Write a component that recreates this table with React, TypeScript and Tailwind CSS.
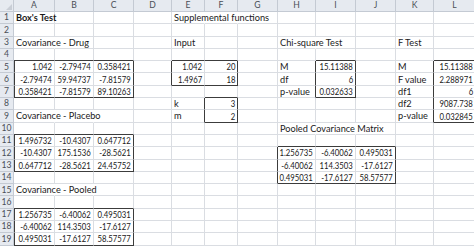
import React from "react";

type Cell = { v: string; b?: boolean; n?: boolean };

const COLS = ["A", "B", "C", "D", "E", "F", "G", "H", "I", "J", "K", "L"];
const W = [
  "w-[41px]",
  "w-[39px]",
  "w-[40px]",
  "w-[38px]",
  "w-[33px]",
  "w-[33px]",
  "w-[40px]",
  "w-[38px]",
  "w-[40px]",
  "w-[40px]",
  "w-[38px]",
  "w-[42px]",
];

const data: Record<string, Cell> = {};
const t = (k: string, v: string, b = false) => (data[k] = { v, b });
const n = (k: string, v: string) => (data[k] = { v, n: true });

t("A1", "Box's Test", true);
t("E1", "Supplemental functions");
t("A3", "Covariance - Drug");
t("E3", "Input");
t("H3", "Chi-square Test");
t("K3", "F Test");
t("A9", "Covariance - Placebo");
t("A15", "Covariance - Pooled");
t("H10", "Pooled Covariance Matrix");
t("E8", "k");
t("E9", "m");
n("F8", "3");
n("F9", "2");
t("H5", "M");
t("H6", "df");
t("H7", "p-value");
n("I5", "15.11388");
n("I6", "6");
n("I7", "0.032633");
t("K5", "M");
t("K6", "F value");
t("K7", "df1");
t("K8", "df2");
t("K9", "p-value");
n("L5", "15.11388");
n("L6", "2.288971");
n("L7", "6");
n("L8", "9087.738");
n("L9", "0.032845");
n("E5", "1.042");
n("F5", "20");
n("E6", "1.4967");
n("F6", "18");

const fill = (row: number, col: number, m: string[][]) => {
  m.forEach((r, i) =>
    r.forEach((v, j) => n(`${COLS[col + j]}${row + i}`, v))
  );
};
fill(5, 0, [
  ["1.042", "-2.79474", "0.358421"],
  ["-2.79474", "59.94737", "-7.81579"],
  ["0.358421", "-7.81579", "89.10263"],
]);
fill(11, 0, [
  ["1.496732", "-10.4307", "0.647712"],
  ["-10.4307", "175.1536", "-28.5621"],
  ["0.647712", "-28.5621", "24.45752"],
]);
const pooled = [
  ["1.256735", "-6.40062", "0.495031"],
  ["-6.40062", "114.3503", "-17.6127"],
  ["0.495031", "-17.6127", "58.57577"],
];
fill(17, 0, pooled);
fill(12, 7, pooled);

// boxes: [r1, c1, r2, c2]
const BOXES: number[][] = [
  [5, 0, 7, 2],
  [5, 4, 6, 5],
  [8, 5, 9, 5],
  [5, 8, 7, 8],
  [5, 11, 9, 11],
  [11, 0, 13, 2],
  [17, 0, 19, 2],
  [12, 7, 14, 9],
];

const boxOf = (r: number, c: number) =>
  BOXES.find((b) => r >= b[0] && r <= b[2] && c >= b[1] && c <= b[3]);

const darkRight = (r: number, c: number) => {
  const a = boxOf(r, c);
  if (a && a[3] === c) return true;
  const b = boxOf(r, c + 1);
  if (b && b[1] === c + 1) return true;
  return false;
};
const darkBottom = (r: number, c: number) => {
  const a = boxOf(r, c);
  if (a && a[2] === r) return true;
  const b = boxOf(r + 1, c);
  if (b && b[0] === r + 1) return true;
  return false;
};

const hideRight = new Set([
  "A3",
  "A9",
  "B9",
  "A15",
  "B15",
  "E1",
  "F1",
  "H3",
  "H10",
  "I10",
]);

const ROWS = Array.from({ length: 19 }, (_, i) => i + 1);

export default function App() {
  return (
    <div className="w-[474px] h-[246px] overflow-hidden bg-white font-['Lato','Noto_Sans',sans-serif] text-[9.2px] text-[#1a1a1a]">
      {/* column header */}
      <div className="flex h-[12px]">
        <div className="w-[14px] shrink-0 bg-[#e6eaf0] border-r border-b border-[#c4cad3] relative">
          <div className="absolute right-[1px] bottom-[1px] w-0 h-0 border-l-[6px] border-l-transparent border-b-[6px] border-b-[#c9ced6]" />
        </div>
        {COLS.map((c, i) => (
          <div
            key={c}
            className={`${W[i]} shrink-0 bg-[#e6eaf0] border-r border-b border-[#c4cad3] flex items-center justify-center text-[#4a4f57] text-[8.6px] leading-none`}
          >
            {c}
          </div>
        ))}
      </div>
      {ROWS.map((r) => (
        <div key={r} className="flex h-[12.3px]">
          <div className="w-[14px] shrink-0 bg-[#e6eaf0] border-b border-r border-[#c4cad3] flex items-center justify-center text-[#4a4f57] text-[8.6px] leading-none">
            {r}
          </div>
          {COLS.map((c, i) => {
            const key = `${c}${r}`;
            const cell = data[key];
            const rc = darkRight(r, i)
              ? "border-r-[#3c3c3c]"
              : hideRight.has(key)
              ? "border-r-transparent"
              : "border-r-[#dadde2]";
            const bc = darkBottom(r, i)
              ? "border-b-[#3c3c3c]"
              : "border-b-[#dadde2]";
            const lc =
              i === 0 && boxOf(r, 0) ? "border-l border-l-[#3c3c3c]" : "";
            return (
              <div
                key={key}
                className={`${W[i]} shrink-0 border-r border-b ${rc} ${bc} ${lc} flex items-center whitespace-nowrap leading-none ${
                  cell?.n ? "justify-end pr-[2px]" : "justify-start pl-[2px]"
                }`}
              >
                {cell &&
                  (cell.n ? (
                    <span className="inline-block text-[9px] scale-x-[0.86] origin-right">
                      {cell.v}
                    </span>
                  ) : (
                    <span className={cell.b ? "font-bold" : ""}>{cell.v}</span>
                  ))}
              </div>
            );
          })}
        </div>
      ))}
    </div>
  );
}
